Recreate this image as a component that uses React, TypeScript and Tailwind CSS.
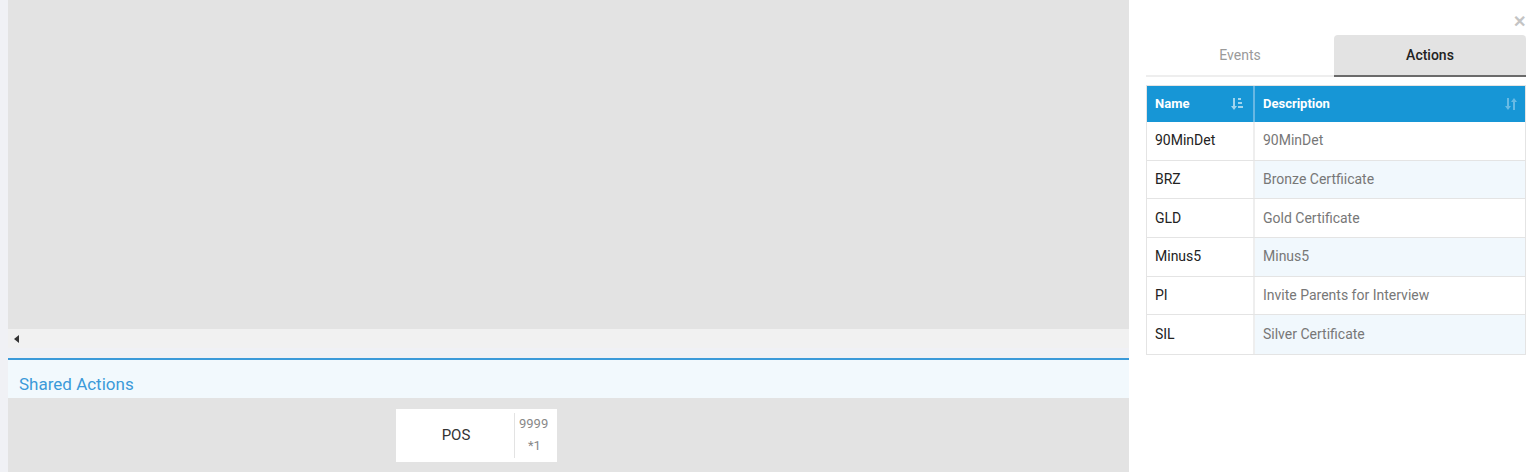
import type { FC } from 'react';

const ROWS: { name: string; desc: string }[] = [
  { name: '90MinDet', desc: '90MinDet' },
  { name: 'BRZ', desc: 'Bronze Certfiicate' },
  { name: 'GLD', desc: 'Gold Certificate' },
  { name: 'Minus5', desc: 'Minus5' },
  { name: 'PI', desc: 'Invite Parents for Interview' },
  { name: 'SIL', desc: 'Silver Certificate' },
];

const SortDownIcon: FC = () => (
  <svg width="12" height="14" viewBox="0 0 12 14" className="opacity-60">
    <path d="M3 1v10" stroke="white" strokeWidth="2" />
    <path d="M0 9l3 4 3-4z" fill="white" />
    <rect x="7" y="1" width="3" height="2" fill="white" />
    <rect x="7" y="5" width="4" height="2" fill="white" />
    <rect x="7" y="9" width="5" height="2" fill="white" />
  </svg>
);

const SortBothIcon: FC = () => (
  <svg width="12" height="14" viewBox="0 0 12 14" className="opacity-35">
    <path d="M3 1v10" stroke="white" strokeWidth="2" />
    <path d="M0 9l3 4 3-4z" fill="white" />
    <path d="M9 3v10" stroke="white" strokeWidth="2" />
    <path d="M6 5l3-4 3 4z" fill="white" />
  </svg>
);

export default function App() {
  return (
    <div className="flex h-[472px] w-[1536px] overflow-hidden bg-white font-['Roboto',sans-serif]">
      {/* Left workspace */}
      <div className="flex w-[1129px] flex-col bg-[#f0f1f5] pl-2">
        <div className="h-[329px] bg-[#e3e3e3]" />
        <div className="flex h-[19px] items-center bg-[#f1f1f1] pl-[6px]">
          <svg width="5" height="8" viewBox="0 0 5 8">
            <path d="M5 0v8L0 4z" fill="#333" />
          </svg>
        </div>
        <div className="h-[10px] bg-[#f0f1f5]" />
        <div className="flex h-[40px] items-center border-t-2 border-[#3b9ad9] bg-[#f2f9fd] pl-[11px] pt-[12px] text-[17px] text-[#3b9ad9]">
          Shared Actions
        </div>
        <div className="flex-1 bg-[#e3e3e3] pl-[388px] pt-[11px]">
          <div className="flex h-[53px] w-[161px] items-center bg-white">
            <div className="w-[118px] pl-[2px] text-center text-[15px] text-[#333]">POS</div>
            <div className="h-[45px] border-l border-[#e3e3e3] pl-[4px] text-[13px] leading-[22px] text-[#888]">
              <div>9999</div>
              <div className="pl-[9px]">*1</div>
            </div>
          </div>
        </div>
      </div>

      {/* Right panel */}
      <div className="relative flex-1 bg-white pl-[17px] pr-[10px]">
        <button className="absolute right-[10px] top-[14px] text-[16px] font-bold leading-none text-[#c4c4c4]">
          ✕
        </button>
        <div className="mt-[35px] flex h-[42px] text-[14px]">
          <div className="flex w-[188px] items-center justify-center border-b-2 border-[#eeeeee] text-[#9a9a9a]">
            Events
          </div>
          <div className="flex flex-1 items-center justify-center rounded-t-[4px] border-b-2 border-[#6b6b6b] bg-[#e3e3e3] font-medium text-[#222]">
            Actions
          </div>
        </div>

        <div className="mt-[8px] border border-[#e4e4e4] text-[14px]">
          <div className="flex h-[36px] bg-[#1796d6] font-bold text-white text-[13px]">
            <div className="flex w-[108px] items-center justify-between border-r-2 border-[#67b7e3] pl-[8px] pr-[10px]">
              <span>Name</span>
              <SortDownIcon />
            </div>
            <div className="flex flex-1 items-center justify-between pl-[8px] pr-[8px]">
              <span>Description</span>
              <SortBothIcon />
            </div>
          </div>
          {ROWS.map((row, i) => (
            <div
              key={row.name}
              className={`flex h-[38.7px] ${i < ROWS.length - 1 ? 'border-b border-[#e4e4e4]' : ''}`}
            >
              <div className="flex w-[108px] items-center border-r-2 border-[#eeeeee] pl-[8px] text-[#222]">
                {row.name}
              </div>
              <div
                className={`flex flex-1 items-center pl-[8px] text-[#777] ${
                  i % 2 === 1 ? 'bg-[#f1f8fd]' : 'bg-white'
                }`}
              >
                {row.desc}
              </div>
            </div>
          ))}
        </div>
      </div>
    </div>
  );
}
